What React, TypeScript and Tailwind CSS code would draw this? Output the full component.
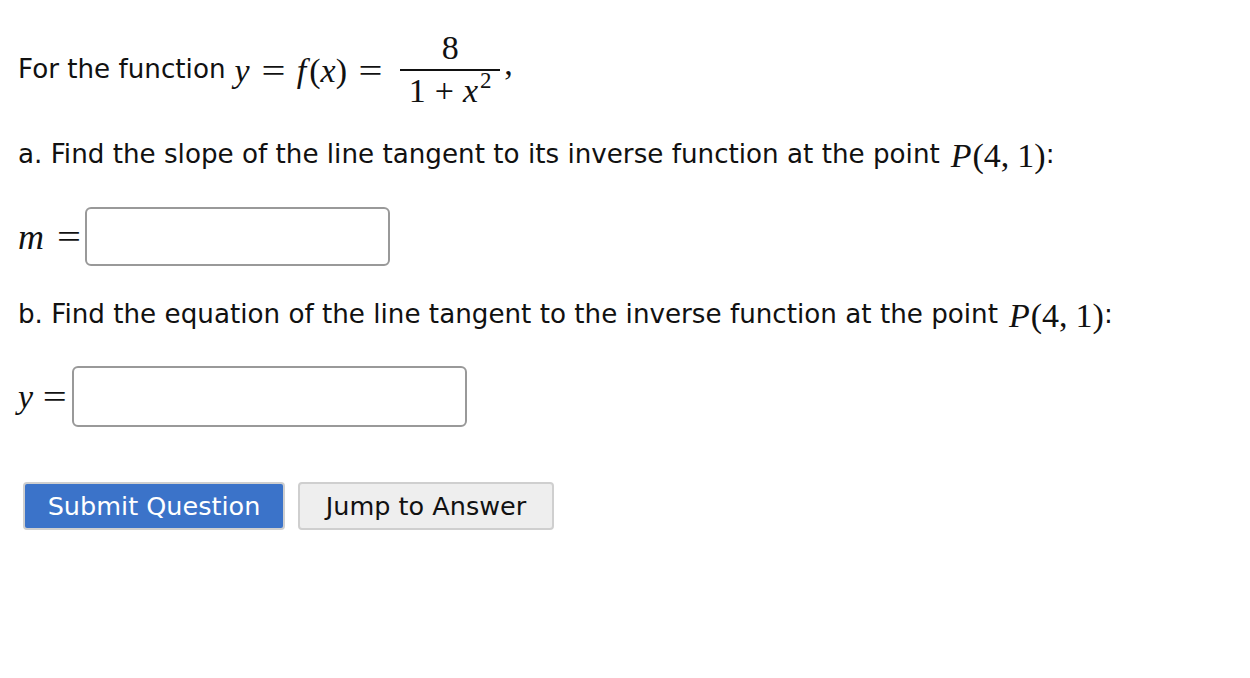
import React from "react";

const sans = { fontFamily: '"DejaVu Sans", Verdana, sans-serif' };

function M({ children, className = "" }: { children: React.ReactNode; className?: string }) {
  return (
    <span className={`italic ${className}`} style={{ fontFamily: '"Liberation Serif", "DejaVu Serif", serif' }}>
      {children}
    </span>
  );
}
function R({ children, className = "" }: { children: React.ReactNode; className?: string }) {
  return (
    <span className={className} style={{ fontFamily: '"Liberation Serif", "DejaVu Serif", serif' }}>
      {children}
    </span>
  );
}

function Point() {
  return (
    <span className="text-[34px] ml-[11px] flex items-center">
      <M className="mr-[1px]">P</M>
      <R>(4,</R>
      <R className="ml-[8px]">1)</R>
    </span>
  );
}

export default function App() {
  return (
    <div className="w-[1250px] h-[678px] bg-white text-[#111] text-[26.2px]" style={sans}>
      <div className="pl-[18px] pt-[28px]">
        <div className="flex items-center h-[84px]">
          <span>For the function</span>
          <span className="flex items-center text-[34px] ml-[9px]">
            <M>y</M>
            <R className="mx-[14px] scale-x-125 inline-block">=</R>
            <M className="mr-[3px]">f</M>
            <R>(</R>
            <M>x</M>
            <R>)</R>
            <R className="mx-[14px] scale-x-125 inline-block">=</R>
            <span className="inline-flex flex-col items-center ml-[6px] mr-[2px]">
              <R className="leading-[34px] pb-[4px]">8</R>
              <span className="block h-[2px] w-[100px] bg-[#111]" />
              <span className="leading-[36px] pt-[2px] flex items-start">
                <R>1</R>
                <R className="mx-[9px]">+</R>
                <M>x</M>
                <R className="text-[23px] leading-[20px] -mt-[2px] ml-[2px]">2</R>
              </span>
            </span>
            <R className="-mt-[14px] ml-[2px]">,</R>
          </span>
        </div>

        <div className="mt-[23px] flex items-center h-[40px]">
          <span>a. Find the slope of the line tangent to its inverse function at the point</span>
          <Point />
          <span>:</span>
        </div>

        <div className="mt-[32px] flex items-center">
          <M className="text-[36px] w-[42px]">m</M>
          <R className="text-[34px] w-[25px] scale-x-125 inline-block">=</R>
          <input
            className="w-[305px] h-[59px] border-2 border-[#999] rounded-[6px] outline-none"
            type="text"
          />
        </div>

        <div className="mt-[29px] flex items-center h-[40px]">
          <span>b. Find the equation of the line tangent to the inverse function at the point</span>
          <Point />
          <span>:</span>
        </div>

        <div className="mt-[31px] flex items-center">
          <M className="text-[34px] w-[28px]">y</M>
          <R className="text-[34px] w-[26px] scale-x-125 inline-block">=</R>
          <input
            className="w-[395px] h-[61px] border-2 border-[#999] rounded-[6px] outline-none"
            type="text"
          />
        </div>

        <div className="mt-[55px] ml-[5px] flex gap-[13px]">
          <button className="w-[262px] h-[48px] bg-[#3b73c9] text-white border-2 border-[#cfcfcf] rounded-[4px] text-[25.5px]" style={sans}>
            Submit Question
          </button>
          <button className="w-[256px] h-[48px] bg-[#eeeeee] text-[#111] border-2 border-[#cfcfcf] rounded-[4px] text-[25.5px]" style={sans}>
            Jump to Answer
          </button>
        </div>
      </div>
    </div>
  );
}
